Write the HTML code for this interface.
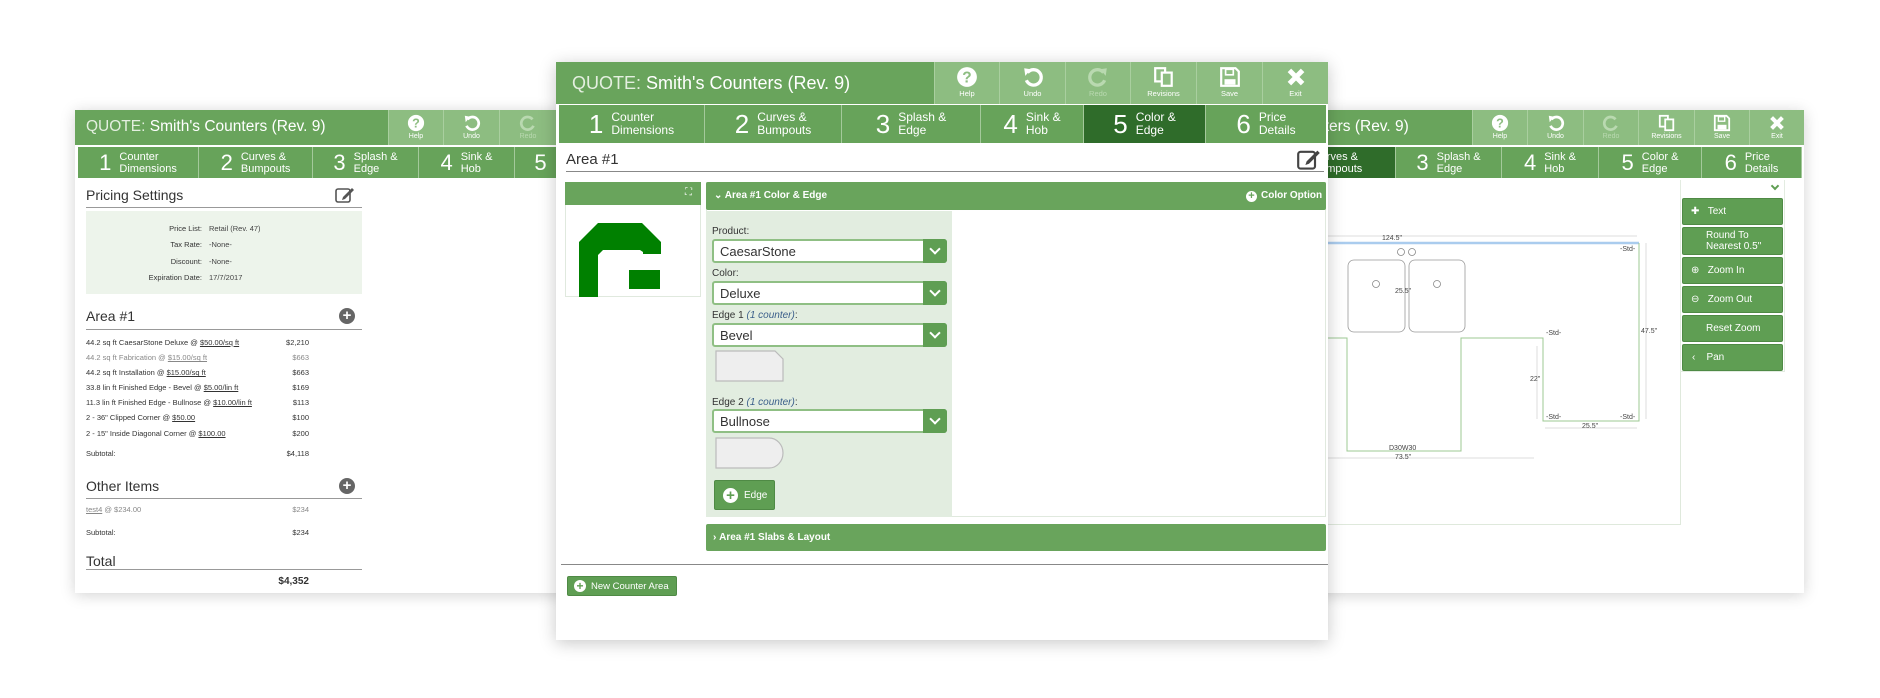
<!DOCTYPE html>
<html><head><meta charset="utf-8">
<style>
*{box-sizing:border-box;margin:0;padding:0}
body{width:1880px;height:698px;background:#fff;position:relative;overflow:hidden;font-family:"Liberation Sans",sans-serif;color:#333}
.abs{position:absolute}
.panel{position:absolute;background:#fff;box-shadow:0 2px 14px rgba(0,0,0,.18)}
.hdr{position:absolute;background:#69a45c;color:#fff}
.hb{position:absolute;top:0;background:#8dbd81;border-left:1px solid #a9cf9f;color:#fff;text-align:center;font-size:7px}
.hb svg{display:block;margin:4px auto 1px}
.tab{position:absolute;background:#67a35a;border-right:1px solid #a4c99b;color:#fff;display:flex;align-items:center;justify-content:center}
.tab b{font-weight:normal;font-size:22px;margin-right:8px}
.tab span{font-size:11px;line-height:12px}
.tab.act{background:#2f6c2a}
.sm{font-size:7.5px;position:absolute;white-space:nowrap}
.gbtn{position:absolute;background:#5f9e53;border:1px solid #4f8a45;border-radius:2px;color:#fff;font-size:10px;display:flex;align-items:center}
.sel{position:absolute;left:712px;width:235px;height:24px;background:#fff;border:2px solid #8fbf84;border-radius:3px;font-size:13px;padding:3px 6px;color:#333}
.sel i{position:absolute;right:-2px;top:-2px;width:24px;height:24px;background:#5f9e53;border-radius:0 3px 3px 0}
.sel i:after{content:"";position:absolute;left:8px;top:6px;width:6px;height:6px;border-right:2.5px solid #fff;border-bottom:2.5px solid #fff;transform:rotate(45deg)}
.lbl{position:absolute;left:712px;font-size:10px;color:#333}
</style></head><body>

<!-- LEFT PANEL -->
<div class="panel" style="left:75px;top:110px;width:560px;height:483px"></div>
<div class="hdr" style="left:75px;top:110px;width:560px;height:35px"></div>
<div class="abs" style="left:86px;top:118px;color:#fff;font-size:15.5px"><span style="color:#e4efe0">QUOTE:</span> Smith's Counters (Rev. 9)</div>
<div class="hb" style="left:388px;top:110px;width:55px;height:35px"><svg width="18" height="18" viewBox="0 0 20 20"><circle cx="10" cy="10" r="9" fill="#fff"/><text x="10" y="15" font-size="14" font-weight="bold" text-anchor="middle" fill="#8dbd81" font-family="Liberation Sans">?</text></svg>Help</div>
<div class="hb" style="left:443px;top:110px;width:56px;height:35px"><svg width="18" height="18" viewBox="0 0 20 20"><path d="M5 6 A7 7 0 1 1 4 13" fill="none" stroke="#fff" stroke-width="3"/><path d="M2 2 L8 3 L3 9Z" fill="#fff"/></svg>Undo</div>
<div class="hb" style="left:499px;top:110px;width:57px;height:35px;color:#b9d9b0"><svg width="18" height="18" viewBox="0 0 20 20"><path d="M15 6 A7 7 0 1 0 16 13" fill="none" stroke="#b9d9b0" stroke-width="3"/></svg>Redo</div>
<div class="tab" style="left:78px;top:147px;width:121px;height:31px"><b>1</b><span>Counter<br>Dimensions</span></div>
<div class="tab" style="left:199px;top:147px;width:114px;height:31px"><b>2</b><span>Curves &amp;<br>Bumpouts</span></div>
<div class="tab" style="left:313px;top:147px;width:106px;height:31px"><b>3</b><span>Splash &amp;<br>Edge</span></div>
<div class="tab" style="left:419px;top:147px;width:96px;height:31px"><b>4</b><span>Sink &amp;<br>Hob</span></div>
<div class="tab" style="left:515px;top:147px;width:60px;height:31px"><b>5</b></div>

<div class="abs" style="left:86px;top:187px;font-size:14px;color:#333">Pricing Settings</div>
<svg class="abs" style="left:335px;top:186px" width="20" height="18" viewBox="0 0 20 18"><rect x="1" y="3" width="14" height="13" rx="2" fill="none" stroke="#555" stroke-width="1.6"/><path d="M8 11 L17 2 L19 4 L10 13 L7 14Z" fill="#555"/></svg>
<div class="abs" style="left:86px;top:207px;width:276px;height:1px;background:#999"></div>
<div class="abs" style="left:86px;top:211px;width:276px;height:83px;background:#edf4eb"></div>
<div class="sm" style="left:86px;width:116px;text-align:right;top:221px;line-height:16.3px;color:#333">Price List:<br>Tax Rate:<br>Discount:<br>Expiration Date:</div>
<div class="sm" style="left:209px;top:221px;line-height:16.3px;color:#444">Retail (Rev. 47)<br>-None-<br>-None-<br>17/7/2017</div>

<div class="abs" style="left:86px;top:308px;font-size:14px">Area #1</div>
<div class="abs" style="left:339px;top:308px;width:16px;height:16px;border-radius:50%;background:#666;color:#fff;font-size:15px;line-height:16px;text-align:center;font-weight:bold">+</div>
<div class="abs" style="left:86px;top:329px;width:276px;height:1px;background:#999"></div>
<div class="sm" style="left:86px;top:335px;line-height:15.1px">44.2 sq ft CaesarStone Deluxe @ <u>$50.00/sq ft</u><br><span style="color:#888">44.2 sq ft Fabrication @ <u>$15.00/sq ft</u></span><br>44.2 sq ft Installation @ <u>$15.00/sq ft</u><br>33.8 lin ft Finished Edge - Bevel @ <u>$5.00/lin ft</u><br>11.3 lin ft Finished Edge - Bullnose @ <u>$10.00/lin ft</u><br>2 - 36" Clipped Corner @ <u>$50.00</u><br>2 - 15" Inside Diagonal Corner @ <u>$100.00</u></div>
<div class="sm" style="left:260px;width:49px;text-align:right;top:335px;line-height:15.1px">$2,210<br><span style="color:#888">$663</span><br>$663<br>$169<br>$113<br>$100<br>$200</div>
<div class="sm" style="left:86px;top:449px">Subtotal:</div><div class="sm" style="left:260px;width:49px;text-align:right;top:449px">$4,118</div>
<div class="abs" style="left:86px;top:478px;font-size:14px">Other Items</div>
<div class="abs" style="left:339px;top:478px;width:16px;height:16px;border-radius:50%;background:#666;color:#fff;font-size:15px;line-height:16px;text-align:center;font-weight:bold">+</div>
<div class="abs" style="left:86px;top:498px;width:276px;height:1px;background:#999"></div>
<div class="sm" style="left:86px;top:505px;color:#888"><u>test4</u> @ $234.00</div><div class="sm" style="left:260px;width:49px;text-align:right;top:505px;color:#888">$234</div>
<div class="sm" style="left:86px;top:528px">Subtotal:</div><div class="sm" style="left:260px;width:49px;text-align:right;top:528px">$234</div>
<div class="abs" style="left:86px;top:553px;font-size:14px">Total</div>
<div class="abs" style="left:86px;top:569px;width:276px;height:1px;background:#999"></div>
<div class="abs" style="left:260px;width:49px;text-align:right;top:576px;font-size:10px;font-weight:bold">$4,352</div>

<!-- RIGHT PANEL -->
<div class="panel" style="left:1040px;top:110px;width:764px;height:483px"></div>
<div class="hdr" style="left:1040px;top:110px;width:764px;height:35px"></div>
<div class="abs" style="left:1233px;top:118px;color:#fff;font-size:15.5px">Smith's Counters (Rev. 9)</div>
<div class="hb" style="left:1472px;top:110px;width:55px;height:35px"><svg width="18" height="18" viewBox="0 0 20 20"><circle cx="10" cy="10" r="9" fill="#fff"/><text x="10" y="15" font-size="14" font-weight="bold" text-anchor="middle" fill="#8dbd81" font-family="Liberation Sans">?</text></svg>Help</div>
<div class="hb" style="left:1527px;top:110px;width:56px;height:35px"><svg width="18" height="18" viewBox="0 0 20 20"><path d="M5 6 A7 7 0 1 1 4 13" fill="none" stroke="#fff" stroke-width="3"/><path d="M2 2 L8 3 L3 9Z" fill="#fff"/></svg>Undo</div>
<div class="hb" style="left:1583px;top:110px;width:55px;height:35px;color:#b9d9b0"><svg width="18" height="18" viewBox="0 0 20 20"><path d="M15 6 A7 7 0 1 0 16 13" fill="none" stroke="#b9d9b0" stroke-width="3"/></svg>Redo</div>
<div class="hb" style="left:1638px;top:110px;width:56px;height:35px"><svg width="18" height="18" viewBox="0 0 20 20"><rect x="2" y="2" width="9" height="12" fill="none" stroke="#fff" stroke-width="2"/><rect x="8" y="6" width="9" height="12" fill="#8dbd81" stroke="#fff" stroke-width="2"/></svg>Revisions</div>
<div class="hb" style="left:1694px;top:110px;width:55px;height:35px"><svg width="18" height="18" viewBox="0 0 20 20"><path d="M2 2H15L18 5V18H2Z" fill="none" stroke="#fff" stroke-width="2"/><rect x="6" y="3" width="7" height="5" fill="none" stroke="#fff" stroke-width="1.5"/><rect x="5" y="12" width="10" height="5" fill="#fff"/></svg>Save</div>
<div class="hb" style="left:1749px;top:110px;width:55px;height:35px"><svg width="18" height="18" viewBox="0 0 20 20"><path d="M4 4L16 16M16 4L4 16" stroke="#fff" stroke-width="4.5"/></svg>Exit</div>
<div class="tab act" style="left:1280px;top:147px;width:116px;height:31px"><span>Curves &amp;<br>Bumpouts</span></div>
<div class="tab" style="left:1396px;top:147px;width:106px;height:31px"><b>3</b><span>Splash &amp;<br>Edge</span></div>
<div class="tab" style="left:1502px;top:147px;width:97px;height:31px"><b>4</b><span>Sink &amp;<br>Hob</span></div>
<div class="tab" style="left:1599px;top:147px;width:103px;height:31px"><b>5</b><span>Color &amp;<br>Edge</span></div>
<div class="tab" style="left:1702px;top:147px;width:100px;height:31px"><b>6</b><span>Price<br>Details</span></div>
<div class="abs" style="left:1200px;top:180px;width:481px;height:345px;border-right:1px solid #dfe9dc;border-bottom:1px solid #dfe9dc"></div>
<svg class="abs" style="left:1200px;top:225px" width="480" height="240" viewBox="1200 225 480 240" font-family="Liberation Sans" font-size="7" fill="#444">
<line x1="1200" y1="236" x2="1637" y2="236" stroke="#ddd"/>
<text x="1392" y="240" text-anchor="middle">124.5"</text>
<line x1="1200" y1="243" x2="1639" y2="243" stroke="#aaccee" stroke-width="2.5"/>
<circle cx="1401" cy="252" r="3.5" fill="none" stroke="#888" stroke-width=".8"/><circle cx="1412" cy="252" r="3.5" fill="none" stroke="#888" stroke-width=".8"/>
<rect x="1348" y="260" width="57" height="72" rx="6" fill="none" stroke="#999" stroke-width=".8"/>
<rect x="1409" y="260" width="56" height="72" rx="6" fill="none" stroke="#999" stroke-width=".8"/>
<circle cx="1376" cy="284" r="3.5" fill="none" stroke="#888" stroke-width=".8"/><circle cx="1437" cy="284" r="3.5" fill="none" stroke="#888" stroke-width=".8"/>
<text x="1395" y="293">25.5"</text>
<path d="M1639 243V421H1543V338H1461V451H1347V338H1200" fill="none" stroke="#9cc893" stroke-width="1"/>
<text x="1620" y="251">-Std-</text><text x="1546" y="335">-Std-</text><text x="1546" y="419">-Std-</text><text x="1620" y="419">-Std-</text>
<line x1="1646" y1="243" x2="1646" y2="419" stroke="#ddd"/><text x="1641" y="333">47.5"</text>
<line x1="1537" y1="346" x2="1537" y2="419" stroke="#ddd"/><text x="1530" y="381">22"</text>
<line x1="1545" y1="428" x2="1637" y2="428" stroke="#ddd"/><text x="1582" y="428">25.5"</text>
<text x="1389" y="450">D30W30</text>
<line x1="1200" y1="458" x2="1534" y2="458" stroke="#ddd"/><text x="1395" y="459">73.5"</text>
</svg>
<div class="abs" style="left:1680px;top:180px;width:105px;height:192px;border:1px solid #e3ece1;border-top:none"></div>
<div class="abs" style="left:1772px;top:183px;width:6px;height:6px;border-right:2px solid #5f9e53;border-bottom:2px solid #5f9e53;transform:rotate(45deg)"></div>
<div class="gbtn" style="left:1682px;top:198px;width:101px;height:27px;padding-left:8px">✚&nbsp;&nbsp;&nbsp;Text</div>
<div class="gbtn" style="left:1682px;top:227px;width:101px;height:28px;padding-left:23px;line-height:11px">Round To<br>Nearest 0.5"</div>
<div class="gbtn" style="left:1682px;top:257px;width:101px;height:27px;padding-left:8px">⊕&nbsp;&nbsp;&nbsp;Zoom In</div>
<div class="gbtn" style="left:1682px;top:286px;width:101px;height:27px;padding-left:8px">⊖&nbsp;&nbsp;&nbsp;Zoom Out</div>
<div class="gbtn" style="left:1682px;top:315px;width:101px;height:27px;padding-left:23px">Reset Zoom</div>
<div class="gbtn" style="left:1682px;top:344px;width:101px;height:27px;padding-left:9px">‹&nbsp;&nbsp;&nbsp;&nbsp;Pan</div>

<!-- CENTER PANEL -->
<div class="panel" style="left:556px;top:62px;width:772px;height:578px;box-shadow:0 3px 16px rgba(0,0,0,.22)"></div>
<div class="hdr" style="left:556px;top:62px;width:772px;height:42px"></div>
<div class="abs" style="left:572px;top:73px;color:#fff;font-size:18px"><span style="color:#e4efe0">QUOTE:</span> Smith's Counters (Rev. 9)</div>
<div class="hb" style="left:934px;top:62px;width:65px;height:42px;font-size:7.5px"><svg width="22" height="22" viewBox="0 0 20 20"><circle cx="10" cy="10" r="9" fill="#fff"/><text x="10" y="15" font-size="14" font-weight="bold" text-anchor="middle" fill="#8dbd81" font-family="Liberation Sans">?</text></svg>Help</div>
<div class="hb" style="left:999px;top:62px;width:66px;height:42px;font-size:7.5px"><svg width="22" height="22" viewBox="0 0 20 20"><path d="M5 6 A7 7 0 1 1 4 13" fill="none" stroke="#fff" stroke-width="3"/><path d="M2 2 L8 3 L3 9Z" fill="#fff"/></svg>Undo</div>
<div class="hb" style="left:1065px;top:62px;width:65px;height:42px;font-size:7.5px;color:#b9d9b0"><svg width="22" height="22" viewBox="0 0 20 20"><path d="M15 6 A7 7 0 1 0 16 13" fill="none" stroke="#b9d9b0" stroke-width="3"/><path d="M18 2 L12 3 L17 9Z" fill="#b9d9b0"/></svg>Redo</div>
<div class="hb" style="left:1130px;top:62px;width:66px;height:42px;font-size:7.5px"><svg width="22" height="22" viewBox="0 0 20 20"><rect x="2" y="2" width="9" height="12" fill="none" stroke="#fff" stroke-width="2"/><rect x="8" y="6" width="9" height="12" fill="#8dbd81" stroke="#fff" stroke-width="2"/></svg>Revisions</div>
<div class="hb" style="left:1196px;top:62px;width:66px;height:42px;font-size:7.5px"><svg width="22" height="22" viewBox="0 0 20 20"><path d="M2 2H15L18 5V18H2Z" fill="none" stroke="#fff" stroke-width="2"/><rect x="6" y="3" width="7" height="5" fill="none" stroke="#fff" stroke-width="1.5"/><rect x="5" y="12" width="10" height="5" fill="#fff"/></svg>Save</div>
<div class="hb" style="left:1262px;top:62px;width:66px;height:42px;font-size:7.5px"><svg width="22" height="22" viewBox="0 0 20 20"><path d="M4 4L16 16M16 4L4 16" stroke="#fff" stroke-width="4.5"/></svg>Exit</div>

<div class="tab" style="left:559px;top:105px;width:146px;height:38px"><b style="font-size:26px">1</b><span style="font-size:12px;line-height:13px">Counter<br>Dimensions</span></div>
<div class="tab" style="left:705px;top:105px;width:137px;height:38px"><b style="font-size:26px">2</b><span style="font-size:12px;line-height:13px">Curves &amp;<br>Bumpouts</span></div>
<div class="tab" style="left:842px;top:105px;width:139px;height:38px"><b style="font-size:26px">3</b><span style="font-size:12px;line-height:13px">Splash &amp;<br>Edge</span></div>
<div class="tab" style="left:981px;top:105px;width:103px;height:38px"><b style="font-size:26px">4</b><span style="font-size:12px;line-height:13px">Sink &amp;<br>Hob</span></div>
<div class="tab act" style="left:1084px;top:105px;width:122px;height:38px"><b style="font-size:26px">5</b><span style="font-size:12px;line-height:13px">Color &amp;<br>Edge</span></div>
<div class="tab" style="left:1206px;top:105px;width:120px;height:38px;border-right:none"><b style="font-size:26px">6</b><span style="font-size:12px;line-height:13px">Price<br>Details</span></div>

<div class="abs" style="left:566px;top:151px;font-size:15px;color:#333">Area #1</div>
<svg class="abs" style="left:1297px;top:148px" width="24" height="22" viewBox="0 0 20 18"><rect x="1" y="3" width="14" height="14" rx="2" fill="none" stroke="#444" stroke-width="1.8"/><path d="M8 11 L17 2 L19 4 L10 13 L7 14Z" fill="#444"/></svg>
<div class="abs" style="left:566px;top:171px;width:758px;height:1px;background:#888"></div>

<div class="abs" style="left:565px;top:182px;width:136px;height:115px;border:1px solid #e0e9de"></div>
<div class="abs" style="left:565px;top:182px;width:136px;height:23px;background:#69a45c"></div>
<div class="abs" style="left:685px;top:187px;color:#fff;font-size:10px">⛶</div>
<svg class="abs" style="left:565px;top:205px" width="136" height="92" viewBox="565 205 136 92"><polygon points="579,242 598,223 642,223 661,242 661,254 643,254 643,252 640,250 603,250 598,255 598,297 579,297" fill="#008000"/><rect x="629" y="270" width="31" height="19" fill="#008000"/></svg>

<div class="abs" style="left:706px;top:182px;width:620px;height:335px;border:1px solid #e0e9de"></div>
<div class="abs" style="left:706px;top:182px;width:620px;height:28px;background:#69a45c;border-radius:2px"></div>
<div class="abs" style="left:714px;top:190px;color:#fff;font-size:10px;font-weight:bold">⌄ Area #1 Color &amp; Edge</div>
<div class="abs" style="left:1246px;top:191px;width:11px;height:11px;border-radius:50%;background:#fff;color:#69a45c;font-size:11px;line-height:11px;text-align:center;font-weight:bold">+</div>
<div class="abs" style="left:1261px;top:190px;color:#fff;font-size:10px;font-weight:bold">Color Option</div>
<div class="abs" style="left:706px;top:211px;width:246px;height:306px;background:#e2ede0"></div>
<div class="lbl" style="top:226px">Product:</div>
<div class="sel" style="top:239px">CaesarStone<i></i></div>
<div class="lbl" style="top:268px">Color:</div>
<div class="sel" style="top:281px">Deluxe<i></i></div>
<div class="lbl" style="top:310px">Edge 1 <i style="color:#3a5e8a">(1 counter)</i>:</div>
<div class="sel" style="top:323px">Bevel<i></i></div>
<svg class="abs" style="left:715px;top:350px" width="70" height="33"><path d="M1 1H60L68 9V31H1Z" fill="#eee" stroke="#bbb" stroke-width="1.2"/></svg>
<div class="lbl" style="top:397px">Edge 2 <i style="color:#3a5e8a">(1 counter)</i>:</div>
<div class="sel" style="top:409px">Bullnose<i></i></div>
<svg class="abs" style="left:715px;top:437px" width="70" height="33"><path d="M1 1H54A14 15 0 0 1 54 31H1Z" fill="#eee" stroke="#bbb" stroke-width="1.2"/></svg>
<div class="gbtn" style="left:714px;top:480px;width:61px;height:30px;padding-left:8px;font-size:10px"><span style="display:inline-block;width:15px;height:15px;border-radius:50%;background:#fff;color:#5f9e53;font-size:15px;line-height:15px;text-align:center;font-weight:bold;margin-right:6px">+</span>Edge</div>
<div class="abs" style="left:706px;top:524px;width:620px;height:27px;background:#69a45c;border-radius:2px"></div>
<div class="abs" style="left:713px;top:532px;color:#fff;font-size:10px;font-weight:bold">›&nbsp;Area #1 Slabs &amp; Layout</div>
<div class="abs" style="left:561px;top:564px;width:767px;height:1px;background:#888"></div>
<div class="gbtn" style="left:567px;top:576px;width:110px;height:20px;padding-left:6px;font-size:9.5px"><span style="display:inline-block;width:12px;height:12px;border-radius:50%;background:#fff;color:#5f9e53;font-size:12px;line-height:12px;text-align:center;font-weight:bold;margin-right:5px">+</span>New Counter Area</div>
</body></html>
